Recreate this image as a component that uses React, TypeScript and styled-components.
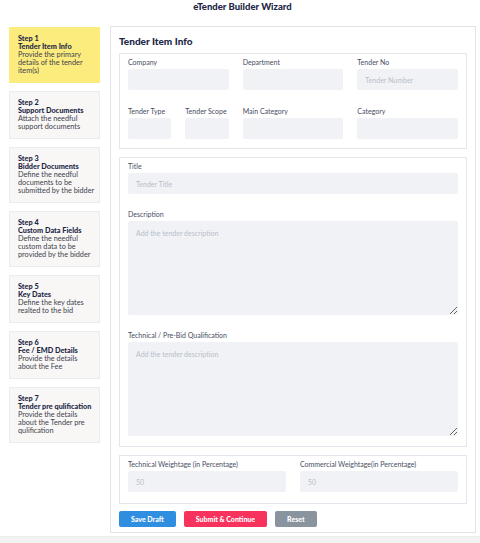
import React from "react";
import styled, { createGlobalStyle } from "styled-components";

const GlobalStyle = createGlobalStyle`
  html, body {
    margin: 0;
    padding: 0;
    background: #f2f2f3;
  }
  body {
    font-family: "Lato", "Noto Sans", sans-serif;
    color: #1d2747;
  }
  * {
    box-sizing: border-box;
  }
`;

const Page = styled.div`
  background: #ffffff;
  padding: 0 4px 3px 9px;
  border-bottom: 1px solid #ececec;
`;

const PageTitle = styled.h1`
  margin: 0;
  height: 26px;
  padding-top: 1px;
  text-align: center;
  font-size: 9.5px;
  line-height: 12px;
  font-weight: 900;
  color: #1d2747;
`;

const Layout = styled.div`
  display: flex;
  flex-direction: row;
  align-items: flex-start;
  gap: 10px;
`;

const Sidebar = styled.div`
  display: flex;
  flex-direction: column;
  gap: 8px;
  width: 91px;
  padding-top: 1px;
`;

const StepCard = styled.div<{ active?: boolean }>`
  padding: 7px 1px 7px 8px;
  background: ${(p) => (p.active ? "#fcec7d" : "#f8f7f5")};
  border: 1px solid ${(p) => (p.active ? "#fcec7d" : "#ececec")};
  font-size: 7.3px;
  line-height: 8px;
`;

const StepLabel = styled.div`
  font-weight: 900;
  color: #1d2747;
`;

const StepDesc = styled.div`
  color: #3d4250;
  padding-right: 2px;
`;

const Panel = styled.div`
  flex: 1;
  border: 1px solid #dfe3ea;
  padding: 7px 8px 5px 8px;
  display: flex;
  flex-direction: column;
  gap: 8px;
`;

const Heading = styled.h2`
  margin: 0 0 -3px 0;
  font-size: 10px;
  line-height: 14px;
  font-weight: 900;
  color: #1d2747;
`;

const Section = styled.div<{ cols: number; rowGap?: number; pb?: number }>`
  border: 1px solid #e3e7ed;
  padding: 3px 8px ${(p) => p.pb ?? 10}px 8px;
  display: grid;
  grid-template-columns: repeat(${(p) => p.cols}, 1fr);
  column-gap: 14px;
  row-gap: ${(p) => p.rowGap ?? 16}px;
`;

const Field = styled.div<{ span?: number }>`
  grid-column: span ${(p) => p.span || 1};
  display: flex;
  flex-direction: column;
  gap: 2px;
  min-width: 0;
`;

const Label = styled.label`
  font-size: 7px;
  line-height: 10px;
  color: #474d63;
  white-space: nowrap;
`;

const Input = styled.input`
  height: 21px;
  width: 100%;
  border: none;
  border-radius: 2px;
  background: #f0f2f5;
  padding: 0 8px;
  font-family: inherit;
  font-size: 7px;
  color: #1d2747;
  outline: none;

  &::placeholder {
    color: #b9bfca;
  }
`;

const TextArea = styled.textarea`
  height: 94px;
  width: 100%;
  border: none;
  border-radius: 2px;
  background: #f0f2f5;
  padding: 8px;
  font-family: inherit;
  font-size: 7px;
  color: #1d2747;
  outline: none;
  resize: vertical;

  &::placeholder {
    color: #b9bfca;
  }
`;

const ButtonRow = styled.div`
  display: flex;
  flex-direction: row;
  gap: 8px;
  margin-top: -1px;
`;

const Button = styled.button<{ color: string }>`
  height: 16px;
  padding: 0 12px;
  border: none;
  border-radius: 2px;
  background: ${(p) => p.color};
  color: #ffffff;
  font-family: inherit;
  font-size: 7px;
  font-weight: 900;
  cursor: pointer;
`;

const steps = [
  { step: "Step 1", title: "Tender Item Info", desc: "Provide the primary details of the tender item(s)" },
  { step: "Step 2", title: "Support Documents", desc: "Attach the needful support documents" },
  { step: "Step 3", title: "Bidder Documents", desc: "Define the needful documents to be submitted by the bidder" },
  { step: "Step 4", title: "Custom Data Fields", desc: "Define the needful custom data to be provided by the bidder" },
  { step: "Step 5", title: "Key Dates", desc: "Define the key dates realted to the bid" },
  { step: "Step 6", title: "Fee / EMD Details", desc: "Provide the details about the Fee" },
  { step: "Step 7", title: "Tender pre qulification", desc: "Provide the details about the Tender pre qulification" },
];

const App: React.FC = () => {
  return (
    <>
      <GlobalStyle />
      <Page>
        <PageTitle>eTender Builder Wizard</PageTitle>
        <Layout>
          <Sidebar>
            {steps.map((s, i) => (
              <StepCard key={s.step} active={i === 0}>
                <StepLabel>{s.step}</StepLabel>
                <StepLabel>{s.title}</StepLabel>
                <StepDesc>{s.desc}</StepDesc>
              </StepCard>
            ))}
          </Sidebar>

          <Panel>
            <Heading>Tender Item Info</Heading>

            <Section cols={6} pb={9}>
              <Field span={2}>
                <Label>Company</Label>
                <Input />
              </Field>
              <Field span={2}>
                <Label>Department</Label>
                <Input />
              </Field>
              <Field span={2}>
                <Label>Tender No</Label>
                <Input placeholder="Tender Number" />
              </Field>
              <Field>
                <Label>Tender Type</Label>
                <Input />
              </Field>
              <Field>
                <Label>Tender Scope</Label>
                <Input />
              </Field>
              <Field span={2}>
                <Label>Main Category</Label>
                <Input />
              </Field>
              <Field span={2}>
                <Label>Category</Label>
                <Input />
              </Field>
            </Section>

            <Section cols={1} rowGap={15}>
              <Field>
                <Label>Title</Label>
                <Input placeholder="Tender Title" />
              </Field>
              <Field>
                <Label>Description</Label>
                <TextArea placeholder="Add the tender description" />
              </Field>
              <Field>
                <Label>Technical / Pre-Bid Qualification</Label>
                <TextArea placeholder="Add the tender description" />
              </Field>
            </Section>

            <Section cols={2} pb={11}>
              <Field>
                <Label>Technical Weightage (in Percentage)</Label>
                <Input placeholder="50" />
              </Field>
              <Field>
                <Label>Commercial Weightage(in Percentage)</Label>
                <Input placeholder="50" />
              </Field>
            </Section>

            <ButtonRow>
              <Button color="#2f8ee0">Save Draft</Button>
              <Button color="#f7325c">Submit &amp; Continue</Button>
              <Button color="#8a949e">Reset</Button>
            </ButtonRow>
          </Panel>
        </Layout>
      </Page>
    </>
  );
};

export default App;
